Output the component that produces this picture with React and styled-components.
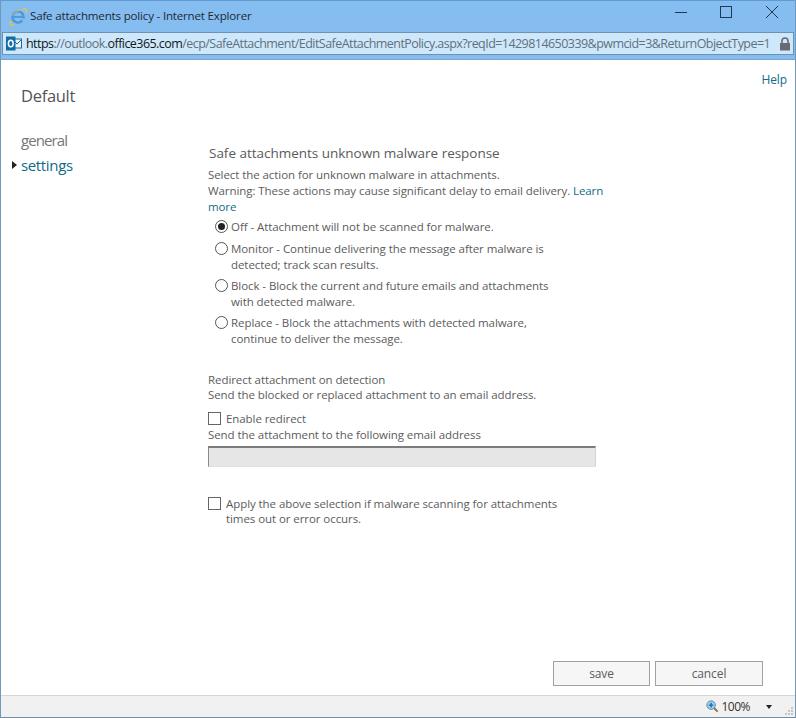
import React from 'react';
import styled, { createGlobalStyle } from 'styled-components';

const GlobalStyle = createGlobalStyle`
  html, body {
    margin: 0;
    padding: 0;
    background: #ffffff;
    font-family: "Open Sans", "Noto Sans", sans-serif;
  }
`;

const teal = '#0f6b87';
const grey = '#5c5c5c';

const Frame = styled.div`
  width: 796px;
  height: 718px;
  box-sizing: border-box;
  display: flex;
  flex-flow: column;
  background: #ffffff;
  border-left: 1px solid #6f99b8;
  border-right: 1px solid #6f99b8;
  border-bottom: 1px solid #6f8ea6;
  overflow: hidden;
`;

const Chrome = styled.div`
  height: 60px;
  flex: none;
  box-sizing: border-box;
  background: #85bdf0;
  border-top: 1px solid #5f9bd0;
  border-bottom: 1px solid #7aa4c8;
  padding: 0 1px;
`;

const TitleBar = styled.div`
  height: 31px;
  display: flex;
  align-items: center;
  padding-left: 6px;
`;

const TitleText = styled.div`
  margin: -2px 0 0 2px;
  font-size: 11.6px;
  letter-spacing: -0.2px;
  color: #1d2a36;
  flex-grow: 1;
`;

const WindowButton = styled.div`
  width: 45px;
  height: 26px;
  margin-top: -10px;
  display: flex;
  align-items: center;
  justify-content: center;
  &:not(:last-child) {
    transform: translateX(-1px);
  }
`;

const AddressBar = styled.div`
  height: 23px;
  box-sizing: border-box;
  display: flex;
  align-items: center;
  background: #cfe7fa;
  border: 1px solid #6d93b3;
  padding: 0 2px 0 3px;
  svg {
    flex: none;
  }
`;

const Url = styled.div`
  margin-left: 4px;
  flex-grow: 1;
  font-size: 12.5px;
  letter-spacing: -0.55px;
  white-space: nowrap;
  color: #5d7280;
  b {
    font-weight: 400;
    color: #101820;
  }
`;

const Page = styled.div`
  flex-grow: 1;
  display: flex;
  flex-flow: column;
  min-height: 0;
`;

const HelpRow = styled.div`
  display: flex;
  justify-content: flex-end;
  height: 13px;
  padding: 11px 8px 0 0;
`;

const Link = styled.a`
  color: ${teal};
  font-size: 11.5px;
  letter-spacing: -0.1px;
`;

const HelpLink = styled(Link)`
  font-size: 12px;
`;

const Body = styled.div`
  flex-grow: 1;
  display: flex;
  min-height: 0;
`;

const Sidebar = styled.div`
  width: 207px;
  flex: none;
  box-sizing: border-box;
  padding-left: 20px;
`;

const PolicyName = styled.div`
  font-size: 16.5px;
  line-height: 24px;
  letter-spacing: -0.3px;
  color: #555555;
  margin-bottom: 20px;
`;

const NavItem = styled.div`
  position: relative;
  font-size: 15px;
  line-height: 25px;
  letter-spacing: ${(p) => (p.$active ? '-0.35px' : '-0.9px')};
  color: ${(p) => (p.$active ? teal : '#777777')};
`;

const NavArrow = styled.span`
  position: absolute;
  left: -9px;
  top: 8px;
  border-left: 5px solid #222222;
  border-top: 4px solid transparent;
  border-bottom: 4px solid transparent;
`;

const Content = styled.div`
  width: 400px;
  padding-top: 59px;
  color: ${grey};
  font-size: 11.5px;
  line-height: 16px;
  letter-spacing: -0.07px;
`;

const Heading = styled.div`
  font-size: 13.5px;
  line-height: 20px;
  letter-spacing: -0.02px;
  margin: 0 0 4px 1px;
  color: #5a5a5a;
`;

const Paragraph = styled.div`
  margin-bottom: ${(p) => p.$gap || 0}px;
`;

const OptionList = styled.div`
  display: flex;
  flex-flow: column;
  gap: 5px;
  padding-left: 7px;
  margin-top: 4px;
`;

const Option = styled.div`
  display: flex;
  width: 345px;
  margin-bottom: ${(p) => p.$gap || 0}px;
`;

const Radio = styled.span`
  width: 13px;
  height: 13px;
  flex: none;
  margin: 1px 3px 0 0;
  box-sizing: border-box;
  border: 1px solid #555555;
  border-radius: 50%;
  display: flex;
  align-items: center;
  justify-content: center;
  &::after {
    content: '';
    display: ${(p) => (p.$checked ? 'block' : 'none')};
    width: 7px;
    height: 7px;
    border-radius: 50%;
    background: #222222;
  }
`;

const Section = styled.div`
  margin-top: ${(p) => p.$top}px;
`;

const CheckRow = styled.div`
  display: flex;
  width: 360px;
  padding-top: 8px;
  margin-bottom: 1px;
  line-height: 15px;
`;

const Checkbox = styled.span`
  width: 11px;
  height: 11px;
  flex: none;
  margin: 1px 5px 0 0;
  border: 1px solid #666666;
`;

const DisabledInput = styled.div`
  width: 388px;
  height: 21px;
  box-sizing: border-box;
  margin-top: 3px;
  background: #e6e6e6;
  border-top: 2px solid #7c7c7c;
  border-left: 1px solid #8a8a8a;
  border-right: 1px solid #d4d4d4;
  border-bottom: 1px solid #e0e0e0;
`;

const Footer = styled.div`
  display: flex;
  justify-content: flex-end;
  gap: 5px;
  padding: 0 32px 9px 0;
  flex: none;
`;

const Button = styled.button`
  width: ${(p) => p.$width}px;
  height: 25px;
  box-sizing: border-box;
  background: #f6f6f6;
  border: 1px solid #a0a0a0;
  color: ${grey};
  font-family: inherit;
  font-size: 12px;
  letter-spacing: -0.1px;
  padding: 0;
`;

const StatusBar = styled.div`
  position: relative;
  height: 22px;
  flex: none;
  box-sizing: border-box;
  background: #f1f1f1;
  border-top: 1px solid #d6d6d6;
  display: flex;
  align-items: center;
  justify-content: flex-end;
  padding-right: 23px;
  color: #333333;
  font-size: 12px;
  letter-spacing: -0.5px;
`;

const ZoomCaret = styled.span`
  margin-left: 16px;
  border-top: 4px solid #222222;
  border-left: 3px solid transparent;
  border-right: 3px solid transparent;
`;

const Grip = styled.svg`
  position: absolute;
  right: 2px;
  bottom: 2px;
`;

const IeLogo = () => (
  <svg width="20" height="20" viewBox="0 0 20 20">
    <path d="M3 13.5C.8 17.5 2.5 19.5 6.5 17.6M13.5 3C17 .8 19.8 1.8 18 6" fill="none" stroke="#e4c34f" strokeWidth="1.4" />
    <circle cx="10" cy="10" r="5.6" fill="none" stroke="#4d97d6" strokeWidth="2.4" />
    <path d="M5.4 10h9.4" stroke="#4d97d6" strokeWidth="1.8" />
    <path d="M14 12.6h2.4" stroke="#85bdf0" strokeWidth="2.4" />
    <path d="M4 8.5C6 5.5 9 3.5 12.5 3" fill="none" stroke="#e4c34f" strokeWidth="1" />
  </svg>
);

const OutlookLogo = () => (
  <svg width="16" height="15" viewBox="0 0 16 15">
    <rect x="7" y="3" width="8.5" height="9" fill="#eaf3fa" stroke="#1d6a9a" />
    <path d="M8 5l3 3 4-4" fill="none" stroke="#1d6a9a" />
    <rect x="0" y="0.5" width="9.5" height="14" fill="#0f6ea8" />
    <ellipse cx="4.8" cy="7.5" rx="2.4" ry="3.3" fill="none" stroke="#ffffff" strokeWidth="1.5" />
  </svg>
);

const LockIcon = () => (
  <svg width="12" height="14" viewBox="0 0 12 14">
    <path d="M3 6V4a3 3 0 0 1 6 0v2" fill="none" stroke="#6a6a72" strokeWidth="1.6" />
    <rect x="1" y="6" width="10" height="7.5" fill="#6a6a72" />
  </svg>
);

const MagnifierIcon = () => (
  <svg width="13" height="13" viewBox="0 0 14 14" style={{ marginRight: 2 }}>
    <path d="M8.5 8.5l4 4" stroke="#9a6a3a" strokeWidth="2.2" />
    <circle cx="5.5" cy="5.5" r="4.6" fill="#9fd0ee" stroke="#5c87a6" />
    <path d="M3 5.5h5M5.5 3v5" stroke="#1f6f9f" strokeWidth="1.5" />
  </svg>
);

const App = () => (
  <Frame>
    <GlobalStyle />
    <Chrome>
      <TitleBar>
        <IeLogo />
        <TitleText>Safe attachments policy - Internet Explorer</TitleText>
        <WindowButton>
          <svg width="14" height="14" viewBox="0 0 14 14">
            <path d="M1 7.5h12" stroke="#1a3a55" strokeWidth="1" />
          </svg>
        </WindowButton>
        <WindowButton>
          <svg width="14" height="14" viewBox="0 0 14 14">
            <rect x="1.5" y="1.5" width="11" height="11" fill="none" stroke="#1a3a55" />
          </svg>
        </WindowButton>
        <WindowButton>
          <svg width="14" height="14" viewBox="0 0 14 14">
            <path d="M1 1l12 12M13 1L1 13" stroke="#1a3a55" strokeWidth="1" />
          </svg>
        </WindowButton>
      </TitleBar>
      <AddressBar>
        <OutlookLogo />
        <Url>
          <b>https</b>://outlook.<b>office365.com</b>/ecp/SafeAttachment/EditSafeAttachmentPolicy.aspx?reqId=1429814650339&amp;pwmcid=3&amp;ReturnObjectType=1
        </Url>
        <LockIcon />
      </AddressBar>
    </Chrome>
    <Page>
      <HelpRow>
        <HelpLink>Help</HelpLink>
      </HelpRow>
      <Body>
        <Sidebar>
          <PolicyName>Default</PolicyName>
          <NavItem>general</NavItem>
          <NavItem $active>
            <NavArrow />
            settings
          </NavItem>
        </Sidebar>
        <Content>
          <Heading>Safe attachments unknown malware response</Heading>
          <Paragraph>Select the action for unknown malware in attachments.</Paragraph>
          <Paragraph>
            Warning: These actions may cause significant delay to email delivery. <Link>Learn more</Link>
          </Paragraph>
          <OptionList>
            <Option $gap={1}>
              <Radio $checked />
              <span>Off - Attachment will not be scanned for malware.</span>
            </Option>
            <Option>
              <Radio />
              <span>Monitor - Continue delivering the message after malware is detected; track scan results.</span>
            </Option>
            <Option>
              <Radio />
              <span>Block - Block the current and future emails and attachments with detected malware.</span>
            </Option>
            <Option>
              <Radio />
              <span>Replace - Block the attachments with detected malware, continue to deliver the message.</span>
            </Option>
          </OptionList>
          <Section $top={25}>
            <Paragraph $gap={-1}>Redirect attachment on detection</Paragraph>
            <Paragraph>Send the blocked or replaced attachment to an email address.</Paragraph>
            <CheckRow>
              <Checkbox />
              <span>Enable redirect</span>
            </CheckRow>
            <Paragraph>Send the attachment to the following email address</Paragraph>
            <DisabledInput />
          </Section>
          <Section $top={21}>
            <CheckRow>
              <Checkbox />
              <span>Apply the above selection if malware scanning for attachments times out or error occurs.</span>
            </CheckRow>
          </Section>
        </Content>
      </Body>
      <Footer>
        <Button $width={97}>save</Button>
        <Button $width={108}>cancel</Button>
      </Footer>
    </Page>
    <StatusBar>
      <MagnifierIcon />
      100%
      <ZoomCaret />
      <Grip width="8" height="8" viewBox="0 0 8 8">
        <path d="M6 0h2v2H6zM3 3h2v2H3zM6 3h2v2H6zM0 6h2v2H0zM3 6h2v2H3zM6 6h2v2H6z" fill="#c4c4c4" />
      </Grip>
    </StatusBar>
  </Frame>
);

export default App;
